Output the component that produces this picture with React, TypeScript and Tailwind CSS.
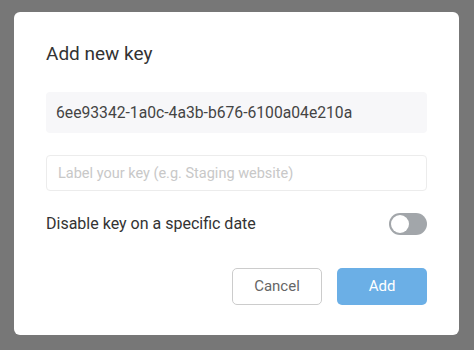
export default function App() {
  return (
    <div
      className="w-[474px] h-[350px] bg-[#777777] pt-[12px] pl-[14px]"
      style={{ fontFamily: "Roboto, 'Liberation Sans', sans-serif" }}
    >
      <div className="w-[445px] h-[323px] bg-white rounded-[6px] px-[32px] pt-[30px]">
        <h2 className="text-[19px] leading-[24px] text-[#333333]">Add new key</h2>

        <div className="mt-[26px] h-[41px] rounded-[4px] bg-[#f7f7f9] px-[10px] flex items-center text-[15.7px] text-[#444444]">
          6ee93342-1a0c-4a3b-b676-6100a04e210a
        </div>

        <input
          className="mt-[22px] block w-full h-[36px] rounded-[4px] border border-[#ececec] px-[11px] text-[14.5px] text-[#444444] placeholder:text-[#c8c8c8] outline-none"
          placeholder="Label your key (e.g. Staging website)"
        />

        <div className="mt-[21px] flex items-center justify-between">
          <span className="text-[16px] text-[#333333]">Disable key on a specific date</span>
          <div className="w-[38px] h-[22px] rounded-full bg-[#a2a6aa] flex items-center px-[2px]">
            <div className="w-[18px] h-[18px] rounded-full bg-white" />
          </div>
        </div>

        <div className="mt-[32px] flex justify-end gap-[15px]">
          <button className="w-[90px] h-[37px] rounded-[5px] border border-[#cccccc] bg-white text-[15px] text-[#666666]">
            Cancel
          </button>
          <button className="w-[90px] h-[37px] rounded-[5px] bg-[#6bafe6] text-[15px] text-white">
            Add
          </button>
        </div>
      </div>
    </div>
  );
}
